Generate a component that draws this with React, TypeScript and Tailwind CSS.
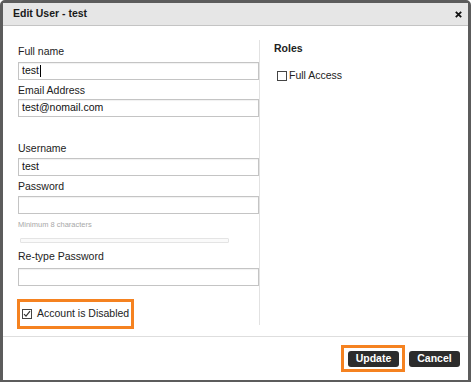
import React from "react";

const font = { fontFamily: '"Liberation Sans", Arial, sans-serif' };

function Label({ children, className = "" }: { children: React.ReactNode; className?: string }) {
  return <div className={`h-[13px] text-[10.5px] leading-[13px] text-[#222] ${className}`}>{children}</div>;
}

function TextInput({ value, cursor = false }: { value?: string; cursor?: boolean }) {
  return (
    <div className="flex h-[18px] w-[241px] items-center border border-[#c4c4c4] bg-white pl-[3px] text-[10.5px] text-[#111] shadow-[inset_0_1px_1px_rgba(0,0,0,0.06)]">
      {value}
      {cursor && <span className="ml-[1px] inline-block h-[12px] w-[1px] bg-black" />}
    </div>
  );
}

function Box({ checked = false }: { checked?: boolean }) {
  return (
    <span className="flex h-[10px] w-[10px] shrink-0 items-center justify-center border border-[#444] bg-white">
      {checked && (
        <svg width="8" height="8" viewBox="0 0 8 8">
          <path d="M1 4.2 L3 6.2 L7 1.2" fill="none" stroke="#333" strokeWidth="1.2" />
        </svg>
      )}
    </span>
  );
}

function DarkButton({ children }: { children: React.ReactNode }) {
  return (
    <button
      type="button"
      className="flex h-[16px] w-[51px] items-center justify-center rounded-[3px] bg-[#2c2c2c] text-[10.5px] font-bold leading-none text-white"
    >
      {children}
    </button>
  );
}

export default function App() {
  return (
    <div className="h-[384px] w-[474px] bg-white" style={font}>
      <div className="flex h-[382px] w-[471px] flex-col rounded-t-[5px] border-x-[3px] border-t-[3px] border-b-[2px] border-[#5c5c5c] bg-white">
        <div className="flex h-[23px] shrink-0 items-center justify-between border-b border-[#c4c4c4] bg-[#e6e6e6] pl-[10px] pr-[6px]">
          <span className="text-[10.5px] font-bold text-[#1a1a1a]">Edit User - test</span>
          <svg width="7" height="7" viewBox="0 0 7 7">
            <path d="M0.8 0.8 L6.2 6.2 M6.2 0.8 L0.8 6.2" stroke="#111" strokeWidth="1.8" />
          </svg>
        </div>

        <div className="flex flex-1 pt-[14px]">
          <div className="w-[256px] shrink-0 pl-[15px] pt-[5px]">
            <Label className="mb-[4px]">Full name</Label>
            <TextInput value="test" cursor />
            <Label className="mb-[2px] mt-[4px]">Email Address</Label>
            <TextInput value="test@nomail.com" />

            <Label className="mb-[3px] mt-[25px]">Username</Label>
            <TextInput value="test" />
            <Label className="mb-[3px] mt-[4px]">Password</Label>
            <TextInput />
            <div className="mt-[6px] h-[10px] text-[7.5px] leading-[10px] text-[#a8a8a8]">Minimum 8 characters</div>
            <div className="ml-[2px] mt-[8px] h-[5px] w-[209px] rounded-[1px] border border-[#e4e4e4] bg-[#fafafa]" />
            <Label className="mb-[5px] mt-[7px]">Re-type Password</Label>
            <TextInput />

            <div className="-ml-[1px] mt-[13px] flex h-[30px] w-[117px] items-center border-[3px] border-[#f58220] pl-[2px]">
              <Box checked />
              <span className="ml-[5px] text-[10.5px] text-[#222]">Account is Disabled</span>
            </div>
          </div>

          <div className="mb-[11px] flex-1 border-l border-[#e2e2e2] pl-[14px] pt-[2px]">
            <div className="h-[13px] text-[10.5px] font-bold leading-[13px] text-[#222]">Roles</div>
            <div className="ml-[3px] mt-[14px] flex h-[13px] items-center">
              <Box />
              <span className="ml-[2px] text-[10.5px] text-[#222]">Full Access</span>
            </div>
          </div>
        </div>

        <div className="flex h-[44px] shrink-0 items-center justify-end border-t border-[#dedede] pr-[8px]">
          <div className="border-[3px] border-[#f58220] py-[2.5px] pl-[4px] pr-[3px]">
            <DarkButton>Update</DarkButton>
          </div>
          <div className="ml-[4px]">
            <DarkButton>Cancel</DarkButton>
          </div>
        </div>
      </div>
    </div>
  );
}
